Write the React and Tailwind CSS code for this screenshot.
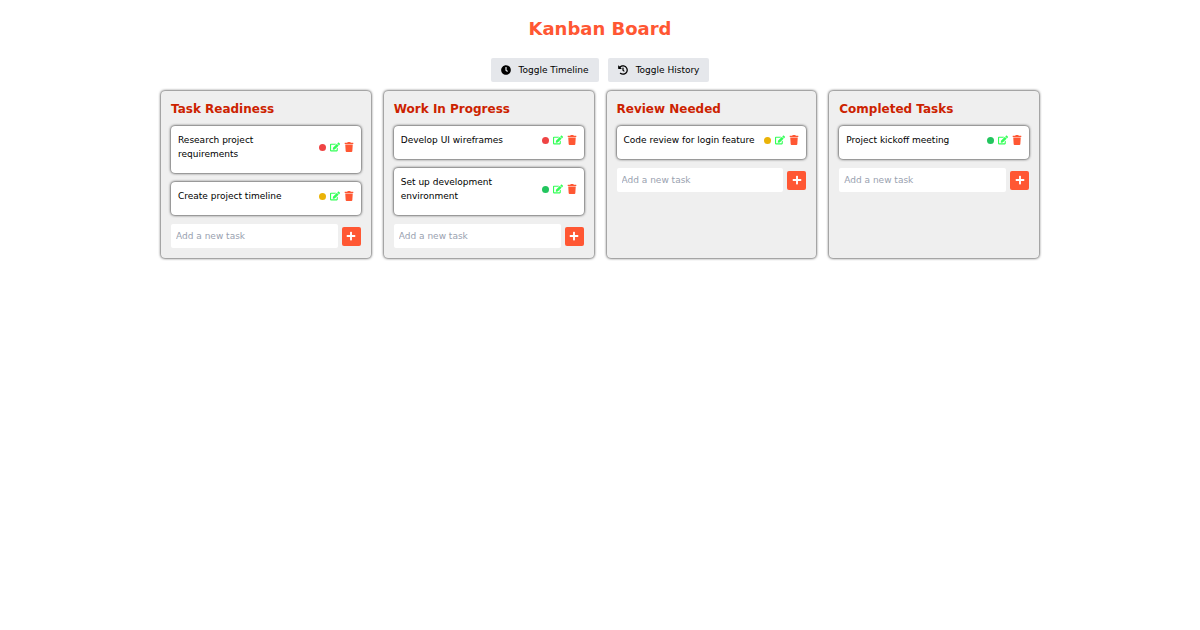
import { useState } from "react";
import { FaClock, FaHistory, FaEdit, FaTrash, FaPlus } from "react-icons/fa";

const initialColumns = [
  {
    title: "Task Readiness",
    tasks: [
      { text: "Research project requirements", dot: "bg-[#ef4444]" },
      { text: "Create project timeline", dot: "bg-[#eab308]" },
    ],
  },
  {
    title: "Work In Progress",
    tasks: [
      { text: "Develop UI wireframes", dot: "bg-[#ef4444]" },
      { text: "Set up development environment", dot: "bg-[#22c55e]" },
    ],
  },
  {
    title: "Review Needed",
    tasks: [{ text: "Code review for login feature", dot: "bg-[#eab308]" }],
  },
  {
    title: "Completed Tasks",
    tasks: [{ text: "Project kickoff meeting", dot: "bg-[#22c55e]" }],
  },
];

function ToolbarButton({ icon: Icon, children }) {
  return (
    <button
      type="button"
      className="flex items-center gap-2 rounded-[2px] bg-gray-200 px-2.5 py-1 leading-4"
    >
      <Icon className="size-2.5" aria-hidden="true" />
      {children}
    </button>
  );
}

function TaskCard({ task, onDelete }) {
  return (
    <li className="rounded-sm bg-white px-[7px] pt-[7px] pb-3 shadow-[0_0_3px_#000000]">
      <div className="flex items-center justify-between gap-2">
        <span>{task.text}</span>
        <div className="flex shrink-0 items-center gap-1">
          <span className={`size-[7px] rounded-full ${task.dot}`} />
          <button type="button" aria-label={`Edit ${task.text}`} className="text-[#33ff57]">
            <FaEdit className="size-2.5" />
          </button>
          <button
            type="button"
            aria-label={`Delete ${task.text}`}
            className="text-[#ff5733]"
            onClick={onDelete}
          >
            <FaTrash className="size-2.5" />
          </button>
        </div>
      </div>
    </li>
  );
}

function Column({ title, tasks, onAdd, onDelete }) {
  const [draft, setDraft] = useState("");
  const submit = (event) => {
    event.preventDefault();
    if (!draft.trim()) return;
    onAdd(draft.trim());
    setDraft("");
  };
  return (
    <section className="min-w-0 rounded-sm bg-[#efefef] p-2.5 shadow-[0_0_3px_#000000]">
      <h2 className="mb-[9px] text-xs leading-4 font-bold text-[#cc2200]">{title}</h2>
      <ul className="flex flex-col gap-[9px]">
        {tasks.map((task, index) => (
          <TaskCard key={task.text} task={task} onDelete={() => onDelete(index)} />
        ))}
      </ul>
      <form onSubmit={submit} className="mt-[9px] flex items-center gap-1">
        <input
          type="text"
          aria-label={`New task for ${title}`}
          placeholder="Add a new task"
          value={draft}
          onChange={(event) => setDraft(event.target.value)}
          className="h-6 min-w-0 flex-1 rounded-[2px] bg-white px-[5px] placeholder:text-gray-400"
        />
        <button
          type="submit"
          aria-label={`Add task to ${title}`}
          className="flex size-[19px] items-center justify-center rounded-[2px] bg-[#ff5733] text-white"
        >
          <FaPlus className="size-2.5" />
        </button>
      </form>
    </section>
  );
}

export default function App() {
  const [columns, setColumns] = useState(initialColumns);
  const updateTasks = (target, change) =>
    setColumns((current) =>
      current.map((column, index) =>
        index === target ? { ...column, tasks: change(column.tasks) } : column
      )
    );

  return (
    <main className="mx-auto w-full max-w-[902px] bg-white px-3 py-4 font-['DejaVu_Sans',sans-serif] text-[9px] leading-[14px] text-black">
      <h1 className="mb-4 text-center text-lg leading-[26px] font-bold text-[#ff5733]">
        Kanban Board
      </h1>
      <div className="mb-[9px] flex justify-center gap-[9px]">
        <ToolbarButton icon={FaClock}>Toggle Timeline</ToolbarButton>
        <ToolbarButton icon={FaHistory}>Toggle History</ToolbarButton>
      </div>
      <div className="grid grid-cols-2 gap-[13px] sm:grid-cols-4">
        {columns.map((column, index) => (
          <Column
            key={column.title}
            {...column}
            onAdd={(text) =>
              updateTasks(index, (tasks) => [...tasks, { text, dot: "bg-[#22c55e]" }])
            }
            onDelete={(position) =>
              updateTasks(index, (tasks) => tasks.filter((_, i) => i !== position))
            }
          />
        ))}
      </div>
    </main>
  );
}
